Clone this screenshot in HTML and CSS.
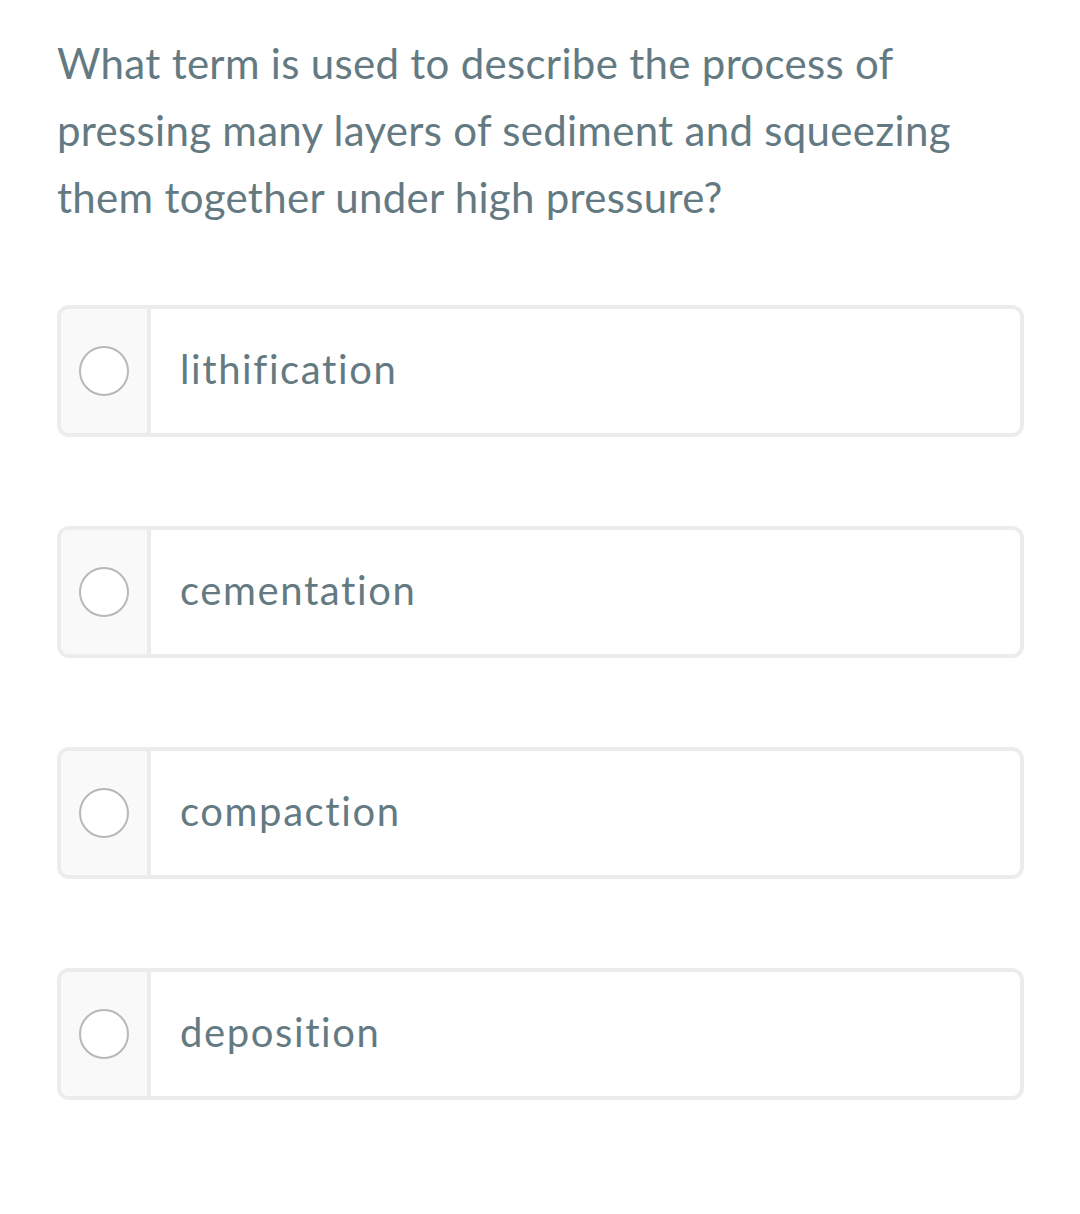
FILE: index.html
```html
<!DOCTYPE html>
<html lang="en">
<head>
    <meta charset="UTF-8">
    <meta name="viewport" content="width=device-width, initial-scale=1.0">
    <title>Quiz Question</title>
    <link rel="stylesheet" href="styles.css">
</head>
<body>

    <!-- Question -->
    <div class="quiz">
        <p class="question">What term is used to describe the process of pressing many layers of sediment and squeezing them together under high pressure?</p>

        <!-- Answer options -->
        <div class="options">
            <label class="option">
                <span class="option-check"><input type="radio" name="answer" value="lithification"><span class="circle"></span></span>
                <span class="option-text">lithification</span>
            </label>
            <label class="option">
                <span class="option-check"><input type="radio" name="answer" value="cementation"><span class="circle"></span></span>
                <span class="option-text">cementation</span>
            </label>
            <label class="option">
                <span class="option-check"><input type="radio" name="answer" value="compaction"><span class="circle"></span></span>
                <span class="option-text">compaction</span>
            </label>
            <label class="option">
                <span class="option-check"><input type="radio" name="answer" value="deposition"><span class="circle"></span></span>
                <span class="option-text">deposition</span>
            </label>
        </div>
    </div>

</body>
</html>
```

FILE: styles.css
```css
body {
    margin: 0;
    background-color: #fff;
    font-family: "Lato", "Noto Sans", sans-serif;
    color: #647a82;
}
.quiz {
    padding: 30px 56px 0 57px;
}
.question {
    margin: 0;
    font-size: 42px;
    line-height: 67px;
    letter-spacing: 0.3px;
    width: 940px;
}
.options {
    display: flex;
    flex-direction: column;
    gap: 89px;
    margin-top: 74px;
}
.option {
    display: flex;
    height: 124px;
    border: 4px solid #ececec;
    border-radius: 12px;
    overflow: hidden;
    cursor: pointer;
}
.option-check {
    width: 86px;
    flex: none;
    display: flex;
    align-items: center;
    justify-content: center;
    background-color: #f9f9f9;
    border-right: 4px solid #ececec;
}
.option-check input {
    display: none;
}
.circle {
    width: 46px;
    height: 46px;
    border: 2px solid #b8b8b8;
    border-radius: 50%;
    background-color: #fff;
}
.option-text {
    display: flex;
    align-items: center;
    padding-left: 29px;
    padding-bottom: 4px;
    font-size: 40px;
    letter-spacing: 1.6px;
}
```
